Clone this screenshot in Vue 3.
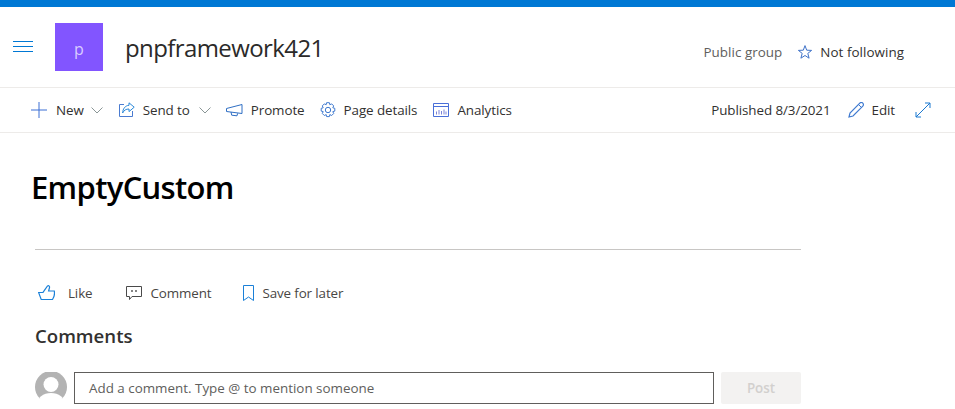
<template>
  <div class="page">
    <div class="topbar"></div>
    <header class="site">
      <svg class="burger" width="20" height="12" viewBox="0 0 20 12"><path d="M0 .5h20M0 5.500h20M0 10.500h20" stroke="#0078d4" fill="none"/></svg>
      <div class="logo">p</div>
      <div class="sitename">pnpframework421</div>
      <div class="siteright">
        <span class="group">Public group</span>
        <svg class="star" width="16" height="16" viewBox="0 0 16 16"><path d="M8 1.600l1.700 4.600 4.900.2-3.800 3 1.300 4.800L8 11.500l-4.100 2.700 1.300-4.800-3.800-3 4.900-.2z" fill="none" stroke="#3f72c8" stroke-width="1"/></svg>
        <span class="follow">Not following</span>
      </div>
    </header>
    <nav class="cmd">
      <div class="cmdleft">
        <span class="item i-new">
          <svg width="16" height="16" viewBox="0 0 16 16"><path d="M8 0v16M0 8h16" stroke="#3b6fd4" fill="none"/></svg>
          <span>New</span>
          <svg class="chev" width="12" height="7" viewBox="0 0 12 7"><path d="M.5.500L6 6l5.500-5.500" stroke="#8a9696" fill="none"/></svg>
        </span>
        <span class="item i-send">
          <svg width="16" height="16" viewBox="0 0 16 16"><path d="M5 2.500H.5v12h13V9" stroke="#4a7bd0" fill="none"/><path d="M10 .8l5.200 4.400L10 9.600V7C7 7 5 8.200 3.600 11 3.800 7 6 3.600 10 3.300z" fill="#fff" stroke="#2b88d8"/></svg>
          <span>Send to</span>
          <svg class="chev chev2" width="12" height="7" viewBox="0 0 12 7"><path d="M.5.500L6 6l5.500-5.500" stroke="#8a9696" fill="none"/></svg>
        </span>
        <span class="item i-promote">
          <svg width="17" height="14" viewBox="0 0 17 14"><path d="M.5 5.500l15.500-4v9L.5 8.500zM5 9l.7 3.200 5.300.6.6-2.400" fill="none" stroke="#2f6fc4"/></svg>
          <span>Promote</span>
        </span>
        <span class="item i-page">
          <svg width="16" height="16" viewBox="0 0 16 16"><circle cx="8" cy="8" r="2.700" fill="none" stroke="#3f7ad0"/><path d="M6.600.7h2.800l.4 2 1.900-.8 2 2-.9 1.900 2 .5v2.800l-2 .5.9 1.900-2 2-1.900-.9-.4 2H6.600l-.4-2-1.900.9-2-2 .9-1.900-2-.5V6.300l2-.5-.9-1.900 2-2 1.900.8z" fill="none" stroke="#3f7ad0"/></svg>
          <span>Page details</span>
        </span>
        <span class="item i-ana">
          <svg width="16" height="14" viewBox="0 0 16 14"><path d="M.5.500h15v13H.5zM.5 3.500h15" fill="none" stroke="#4a6fd8"/><path d="M3.500 11.500v-3M6 11.500V7M8.500 11.500V8M11 11.500V6.500M13 11.500V8.500" fill="none" stroke="#7b83d8"/></svg>
          <span>Analytics</span>
        </span>
      </div>
      <div class="cmdright">
        <span class="pub">Published 8/3/2021</span>
        <span class="item i-edit">
          <svg width="16" height="16" viewBox="0 0 16 16"><path d="M11.800 1.200a2 2 0 0 1 3 3L5 14l-4 1 1-4z" fill="none" stroke="#3f7ad0" stroke-width="1.200"/><path d="M10.500 2.500l3 3" stroke="#3f7ad0" fill="none"/></svg>
          <span>Edit</span>
        </span>
        <svg class="expand" width="16" height="16" viewBox="0 0 16 16"><path d="M1 15L15 1M10 1h5v5M1 10v5h5" fill="none" stroke="#1b78d0"/></svg>
      </div>
    </nav>
    <main class="content">
      <h1 class="title">EmptyCustom</h1>
      <div class="column">
        <hr class="rule" />
        <div class="social">
          <span class="soc s-like">
            <svg width="17" height="16" viewBox="0 0 17 16"><path d="M.6 7.500l4.400-.2L9.500 1c1.500-.8 2.300.4 2 1.600L10.600 6h5.700c.5 3-.4 6.500-1.800 8.500H3.200z" fill="none" stroke="#1b80d8" stroke-width="1.200"/></svg>
            <span>Like</span>
          </span>
          <span class="soc s-comment">
            <svg width="16" height="16" viewBox="0 0 16 16"><path d="M.5 1.500h15v10H6L3.500 14.500v-3h-3z" fill="none" stroke="#4a4a4a"/><path d="M6 5v2M10 5v2" stroke="#333" fill="none" stroke-width="1.200"/></svg>
            <span>Comment</span>
          </span>
          <span class="soc s-save">
            <svg width="11" height="16" viewBox="0 0 11 16"><path d="M.5.500h10v15l-5-3.500-5 3.500z" fill="none" stroke="#1b80d8"/></svg>
            <span>Save for later</span>
          </span>
        </div>
        <h2 class="chead">Comments</h2>
        <div class="composer">
          <svg class="avatar" width="32" height="32" viewBox="0 0 32 32"><defs><clipPath id="c"><circle cx="16" cy="15" r="16"/></clipPath></defs><g clip-path="url(#c)"><rect width="32" height="27" fill="#b3b3b3"/><circle cx="16" cy="12.500" r="7.500" fill="#fff"/><ellipse cx="16" cy="32" rx="14" ry="11" fill="#fff"/></g></svg>
          <div class="inputbox">Add a comment. Type @ to mention someone</div>
          <div class="post">Post</div>
        </div>
      </div>
    </main>
  </div>
</template>

<script setup>
</script>

<style>
html, body { margin: 0; background: #fff; overflow: hidden; }
</style>

<style scoped>
.page { width: 955px; height: 409px; overflow: hidden; font-family: "Open Sans", "Noto Sans", sans-serif; color: #323130; }
.topbar { height: 7px; background: #0078d4; }
.site { height: 80px; display: flex; align-items: center; border-bottom: 1px solid #edebe9; }
.burger { margin-left: 13px; flex: none; }
.logo { width: 48px; height: 48px; box-sizing: border-box; padding-top: 3px; margin-left: 22px; background: #8255ff; color: #d9ccff; font-size: 16px; display: flex; align-items: center; justify-content: center; flex: none; }
.sitename { margin-left: 22px; margin-top: 1px; font-size: 24px; font-weight: 500; color: #2b2a29; letter-spacing: -0.6px; }
.siteright { margin-left: auto; margin-right: 51px; margin-top: 10px; display: flex; align-items: center; font-size: 13.400px; letter-spacing: 0.05px; }
.group { color: #605e5c; }
.star { margin-left: 15px; margin-right: 7px; }
.cmd { height: 44px; display: flex; align-items: center; justify-content: space-between; border-bottom: 1px solid #edebe9; font-size: 13.400px; letter-spacing: -0.08px; }
.cmdleft { display: flex; align-items: center; margin-left: 31px; }
.item { display: flex; align-items: center; }
.i-new svg:first-child { margin-right: 9px; }
.chev { margin-left: 7px; }
.chev2 { margin-left: 9px; }
.i-send { margin-left: 16px; }
.i-send svg:first-child { margin-right: 8px; }
.i-promote { margin-left: 15px; }
.i-promote svg { margin-right: 8px; }
.i-page { margin-left: 15px; }
.i-page svg { margin-right: 8px; }
.i-ana { margin-left: 16px; }
.i-ana svg { margin-right: 8px; }
.cmdright { display: flex; align-items: center; margin-right: 24px; }
.i-edit { margin-left: 17px; }
.i-edit svg { margin-right: 8px; }
.expand { margin-left: 20px; }
.title { margin: 34px 0 0 31px; font-size: 31px; line-height: 40px; font-weight: 600; color: #000; letter-spacing: -0.68px; }
.column { width: 766px; margin-left: 35px; }
.rule { margin: 42px 0 0; border: 0; border-top: 1px solid #c8c6c4; }
.social { display: flex; align-items: center; height: 20px; margin-top: 33px; font-size: 13.400px; letter-spacing: -0.12px; color: #484644; }
.soc { display: flex; align-items: center; }
.s-like { margin-left: 3px; }
.s-like svg { margin-right: 13px; }
.s-comment { margin-left: 34px; }
.s-comment svg { margin-right: 8px; }
.s-save { margin-left: 32px; }
.s-save svg { margin-right: 8px; }
.chead { margin: 21px 0 0; font-size: 18.600px; line-height: 24px; font-weight: 600; color: #323130; letter-spacing: 0; }
.composer { display: flex; align-items: center; margin-top: 24px; }
.avatar { flex: none; }
.inputbox { margin-left: 7px; flex: 1; height: 32px; box-sizing: border-box; border: 1px solid #605e5c; line-height: 30px; padding-left: 14px; font-size: 13.400px; letter-spacing: 0; color: #605e5c; }
.post { margin-left: 7px; width: 80px; height: 32px; background: #f3f2f1; border-radius: 2px; color: #d2d0ce; font-size: 13.400px; font-weight: 600; display: flex; align-items: center; justify-content: center; }
</style>
